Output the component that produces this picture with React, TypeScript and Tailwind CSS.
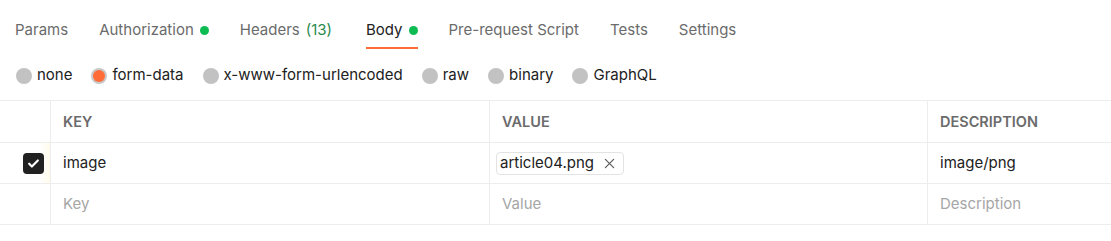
import type { ReactNode } from "react";

const TABS: { label: string; dot?: boolean; count?: string; active?: boolean }[] = [
  { label: "Params" },
  { label: "Authorization", dot: true },
  { label: "Headers", count: "(13)" },
  { label: "Body", dot: true, active: true },
  { label: "Pre-request Script" },
  { label: "Tests" },
  { label: "Settings" },
];

const BODY_TYPES = ["none", "form-data", "x-www-form-urlencoded", "raw", "binary", "GraphQL"];

function Cell({ children, className = "" }: { children?: ReactNode; className?: string }) {
  return (
    <div className={`flex items-center border-l border-[#ededed] pl-3 ${className}`}>{children}</div>
  );
}

export default function App() {
  return (
    <div className="h-[241px] w-[1111px] overflow-hidden bg-white text-[15px] text-[#212121]" style={{ fontFamily: "Inter, 'Noto Sans', sans-serif" }}>
      {/* request tabs */}
      <div className="flex h-[49px] items-stretch pl-[15px]">
        {TABS.map((t) => (
          <div
            key={t.label}
            className={`flex items-center gap-[6px] border-b-2 pt-[20px] pb-[7px] leading-[20px] ${
              t.count ? "mr-[34px]" : "mr-[31px]"
            } ${t.active ? "border-[#ff6c37] text-[#212121]" : "border-transparent text-[#6b6b6b]"}`}
          >
            <span>{t.label}</span>
            {t.count && <span className="text-[#2b8a4e]">{t.count}</span>}
            {t.dot && <span className="h-[9px] w-[9px] rounded-full bg-[#0cbb52]" />}
          </div>
        ))}
      </div>

      {/* body type radios */}
      <div className="flex h-[51px] items-center pl-[16px] pt-[2px]">
        {BODY_TYPES.map((b) => (
          <label key={b} className="mr-[19px] flex items-center gap-[5px]">
            {b === "form-data" ? (
              <span className="flex h-[16px] w-[16px] items-center justify-center rounded-full bg-[#c8c8c8]">
                <span className="h-[12px] w-[12px] rounded-full bg-[#ff6c37]" />
              </span>
            ) : (
              <span className="h-[16px] w-[16px] rounded-full bg-[#c2c2c2]" />
            )}
            <span>{b}</span>
          </label>
        ))}
      </div>

      {/* params table */}
      <div className="border-t border-[#ededed]">
        <div className="grid h-[42px] grid-cols-[50px_439px_438px_1fr] border-b border-[#ededed] text-[14.5px] font-semibold text-[#6b6b6b]">
          <div />
          <Cell>KEY</Cell>
          <Cell>VALUE</Cell>
          <Cell>DESCRIPTION</Cell>
        </div>
        <div className="grid h-[41px] grid-cols-[50px_439px_438px_1fr] border-b border-[#ededed]">
          <div className="flex items-center justify-end pr-[6px] bg-gradient-to-r from-white from-80% to-[#fffbea]">
            <span className="flex h-[21px] w-[21px] items-center justify-center rounded-[4px] bg-[#212121]">
              <svg width="13" height="13" viewBox="0 0 24 24" fill="none" stroke="white" strokeWidth="4" strokeLinecap="round" strokeLinejoin="round">
                <path d="M4 12.5l5 5L20 6.5" />
              </svg>
            </span>
          </div>
          <Cell>image</Cell>
          <Cell className="pl-[6px]">
            <span className="flex h-[23px] items-center gap-[10px] rounded-[4px] border border-[#e3e3e3] pl-[3px] pr-[8px]">
              <span>article04.png</span>
              <svg width="11" height="11" viewBox="0 0 12 12" stroke="#5a5a5a" strokeWidth="1.3" strokeLinecap="round">
                <path d="M1.5 1.5l9 9M10.5 1.5l-9 9" />
              </svg>
            </span>
          </Cell>
          <Cell>image/png</Cell>
        </div>
        <div className="grid h-[41px] grid-cols-[50px_439px_438px_1fr] border-b border-[#ededed] text-[#a6a6a6]">
          <div />
          <Cell>Key</Cell>
          <Cell>Value</Cell>
          <Cell>Description</Cell>
        </div>
      </div>
    </div>
  );
}
